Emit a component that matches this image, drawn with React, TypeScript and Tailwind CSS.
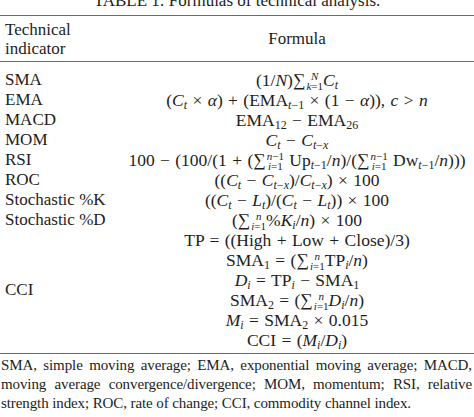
import React from "react";

const I = ({ children }: { children: React.ReactNode }) => <i className="italic">{children}</i>;
const Sb = ({ children }: { children: React.ReactNode }) => (
  <sub className="text-[12px] leading-none relative top-[3px] align-baseline [word-spacing:0px]">{children}</sub>
);
const Sum = ({ lo, hi }: { lo: React.ReactNode; hi: React.ReactNode }) => (
  <span className="inline-flex items-center align-baseline">
    <span>∑</span>
    <span className="inline-flex flex-col text-[11px] leading-[10px] ml-[1px] relative top-[1px]">
      <span>{hi}</span>
      <span>{lo}</span>
    </span>
  </span>
);

type Row = { label?: string; f: React.ReactNode };

const rows: Row[] = [
  {
    label: "SMA",
    f: (
      <>
        (1/<I>N</I>)<Sum lo={<><I>k</I>=1</>} hi={<I>N</I>} />
        <I>C</I>
        <Sb><I>t</I></Sb>
      </>
    ),
  },
  {
    label: "EMA",
    f: (
      <>
        (<I>C</I><Sb><I>t</I></Sb> × <I>α</I>) + (EMA<Sb><I>t</I>−1</Sb> × (1 − <I>α</I>)), <I>c</I> &gt; <I>n</I>
      </>
    ),
  },
  {
    label: "MACD",
    f: (
      <>
        EMA<Sb>12</Sb> − EMA<Sb>26</Sb>
      </>
    ),
  },
  {
    label: "MOM",
    f: (
      <>
        <I>C</I><Sb><I>t</I></Sb> − <I>C</I><Sb><I>t</I>−<I>x</I></Sb>
      </>
    ),
  },
  {
    label: "RSI",
    f: (
      <>
        100 − (100/(1 + (<Sum lo={<><I>i</I>=1</>} hi={<><I>n</I>−1</>} /> Up<Sb><I>t</I>−1</Sb>/<I>n</I>)/(
        <Sum lo={<><I>i</I>=1</>} hi={<><I>n</I>−1</>} /> Dw<Sb><I>t</I>−1</Sb>/<I>n</I>)))
      </>
    ),
  },
  {
    label: "ROC",
    f: (
      <>
        ((<I>C</I><Sb><I>t</I></Sb> − <I>C</I><Sb><I>t</I>−<I>x</I></Sb>)/<I>C</I><Sb><I>t</I>−<I>x</I></Sb>) × 100
      </>
    ),
  },
  {
    label: "Stochastic %K",
    f: (
      <>
        ((<I>C</I><Sb><I>t</I></Sb> − <I>L</I><Sb><I>t</I></Sb>)/(<I>C</I><Sb><I>t</I></Sb> − <I>L</I><Sb><I>t</I></Sb>)) × 100
      </>
    ),
  },
  {
    label: "Stochastic %D",
    f: (
      <>
        (<Sum lo={<><I>i</I>=1</>} hi={<I>n</I>} />%<I>K</I><Sb><I>i</I></Sb>/<I>n</I>) × 100
      </>
    ),
  },
  { f: <>TP = ((High + Low + Close)/3)</> },
  {
    f: (
      <>
        SMA<Sb>1</Sb> = (<Sum lo={<><I>i</I>=1</>} hi={<I>n</I>} />TP<Sb><I>i</I></Sb>/<I>n</I>)
      </>
    ),
  },
  {
    f: (
      <>
        <I>D</I><Sb><I>i</I></Sb> = TP<Sb><I>i</I></Sb> − SMA<Sb>1</Sb>
      </>
    ),
  },
  {
    f: (
      <>
        SMA<Sb>2</Sb> = (<Sum lo={<><I>i</I>=1</>} hi={<I>n</I>} /><I>D</I><Sb><I>i</I></Sb>/<I>n</I>)
      </>
    ),
  },
  {
    f: (
      <>
        <I>M</I><Sb><I>i</I></Sb> = SMA<Sb>2</Sb> × 0.015
      </>
    ),
  },
  {
    f: (
      <>
        CCI = (<I>M</I><Sb><I>i</I></Sb>/<I>D</I><Sb><I>i</I></Sb>)
      </>
    ),
  },
];

export default function App() {
  return (
    <div className="w-[474px] h-[417px] bg-white overflow-hidden text-[#1d1d1d] text-[17px] [font-family:Liberation_Serif,serif]">
      <div className="text-center leading-[17px] mt-[-8px] mb-[6px]">TABLE 1: Formulas of technical analysis.</div>
      <div className="border-t-[1.5px] border-[#6b6b6b]" />
      <div className="flex h-[45px] items-center">
        <div className="w-[120px] pl-[5px] leading-[19px]">
          Technical
          <br />
          indicator
        </div>
        <div className="flex-1 text-center">Formula</div>
      </div>
      <div className="border-t-[1.5px] border-[#6b6b6b]" />
      <div className="grid grid-cols-[120px_1fr] grid-rows-[repeat(14,20px)] pt-[8px] pb-[3px]">
        {rows.map((r, i) => (
          <React.Fragment key={i}>
            {i < 8 && <div className="pl-[5px] leading-[20px] whitespace-nowrap">{r.label}</div>}
            {i === 8 && (
              <div className="row-span-6 pl-[5px] flex items-center">CCI</div>
            )}
            <div className="col-start-2 text-center whitespace-nowrap leading-[20px] text-[17.5px] [word-spacing:1px]">
              {r.f}
            </div>
          </React.Fragment>
        ))}
      </div>
      <div className="border-t-[1.5px] border-[#6b6b6b]" />
      <p className="text-justify text-[15px] leading-[19px] pt-[2px] pl-[1px] pr-[2px] tracking-[-0.1px]">
        SMA, simple moving average; EMA, exponential moving average; MACD, moving average convergence/divergence; MOM,
        momentum; RSI, relative strength index; ROC, rate of change; CCI, commodity channel index.
      </p>
    </div>
  );
}
